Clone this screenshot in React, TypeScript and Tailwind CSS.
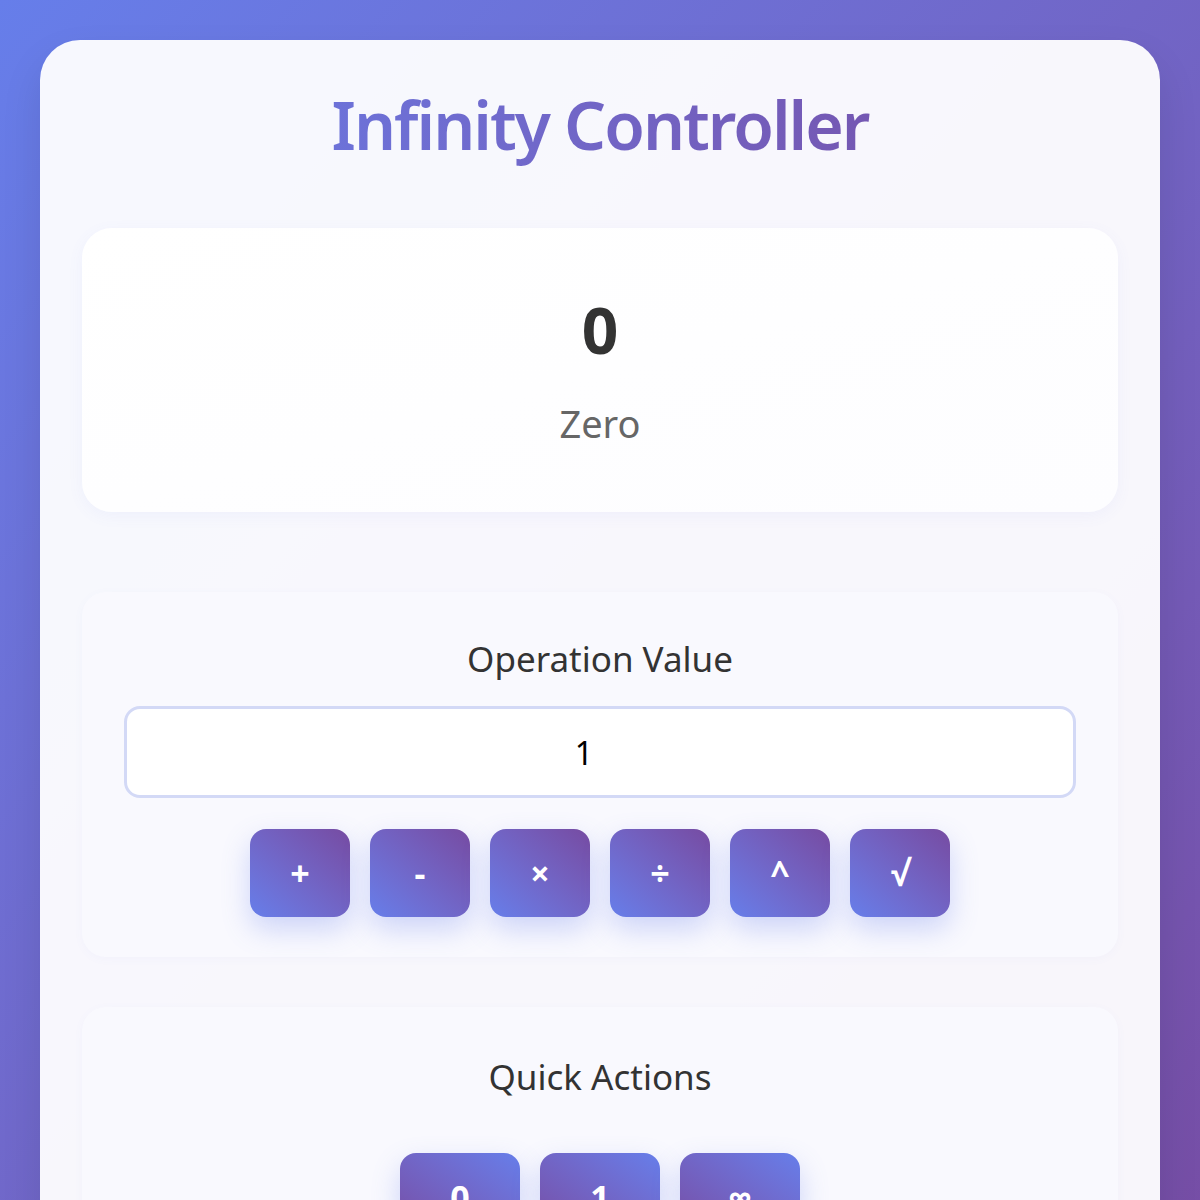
import { useState } from 'react';

const OPS = ['+', '-', '×', '÷', '^', '√'];
const QUICK = ['0', '1', '∞'];

export default function App() {
  const [value, setValue] = useState('1');

  return (
    <div
      className="min-h-screen bg-gradient-to-br from-[#667eea] to-[#764ba2] p-[40px]"
      style={{ fontFamily: '"Noto Sans", "Open Sans", sans-serif' }}
    >
      <div className="rounded-[40px] bg-white/95 px-[42px] pt-[38px] pb-[40px] shadow-[0_20px_40px_rgba(0,0,0,0.1)]">
        <h1 className="mb-[58px] bg-gradient-to-r from-[#667eea] to-[#764ba2] bg-clip-text text-center text-[66px] font-semibold leading-[1.4] tracking-[-2px] text-transparent">
          Infinity Controller
        </h1>

        <div className="flex h-[284px] flex-col items-center justify-center rounded-[30px] bg-gradient-to-br from-white to-[#fdfdff] shadow-[0_4px_16px_rgba(102,126,234,0.06)]">
          <div className="text-[64px] font-bold leading-none text-[#333]">0</div>
          <div className="mt-[42px] text-[38px] leading-none text-[#666]">Zero</div>
        </div>

        <div className="mt-[80px] rounded-[24px] bg-[#f9f9fe] px-[42px] pt-[42px] pb-[40px] shadow-[0_2px_10px_rgba(102,126,234,0.04)]">
          <div className="text-center text-[35px] leading-[1.4] text-[#333]">Operation Value</div>
          <input
            value={value}
            onChange={e => setValue(e.target.value)}
            className="mt-[23px] block h-[92px] w-full rounded-[16px] border-[3px] border-[#d3d9f6] bg-white pr-[32px] text-center text-[32px] text-black outline-none"
          />
          <div className="mt-[31px] flex justify-center gap-[20px]">
            {OPS.map(op => (
              <button
                key={op}
                className="h-[88px] w-[100px] rounded-[16px] bg-gradient-to-tr from-[#667eea] to-[#764ba2] text-[34px] font-bold text-white shadow-[0_12px_28px_rgba(102,126,234,0.3)]"
              >
                {op}
              </button>
            ))}
          </div>
        </div>

        <div className="mt-[50px] rounded-[24px] bg-[#f9f9fe] px-[42px] pt-[45px] pb-[40px] shadow-[0_2px_10px_rgba(102,126,234,0.04)]">
          <div className="text-center text-[35px] leading-[1.4] text-[#333]">Quick Actions</div>
          <div className="mt-[52px] flex justify-center gap-[20px]">
            {QUICK.map(q => (
              <button
                key={q}
                className="h-[88px] w-[120px] rounded-[16px] bg-gradient-to-tr from-[#764ba2] to-[#667eea] text-[34px] font-bold text-white shadow-[0_12px_28px_rgba(102,126,234,0.3)]"
              >
                {q}
              </button>
            ))}
          </div>
        </div>
      </div>
    </div>
  );
}
